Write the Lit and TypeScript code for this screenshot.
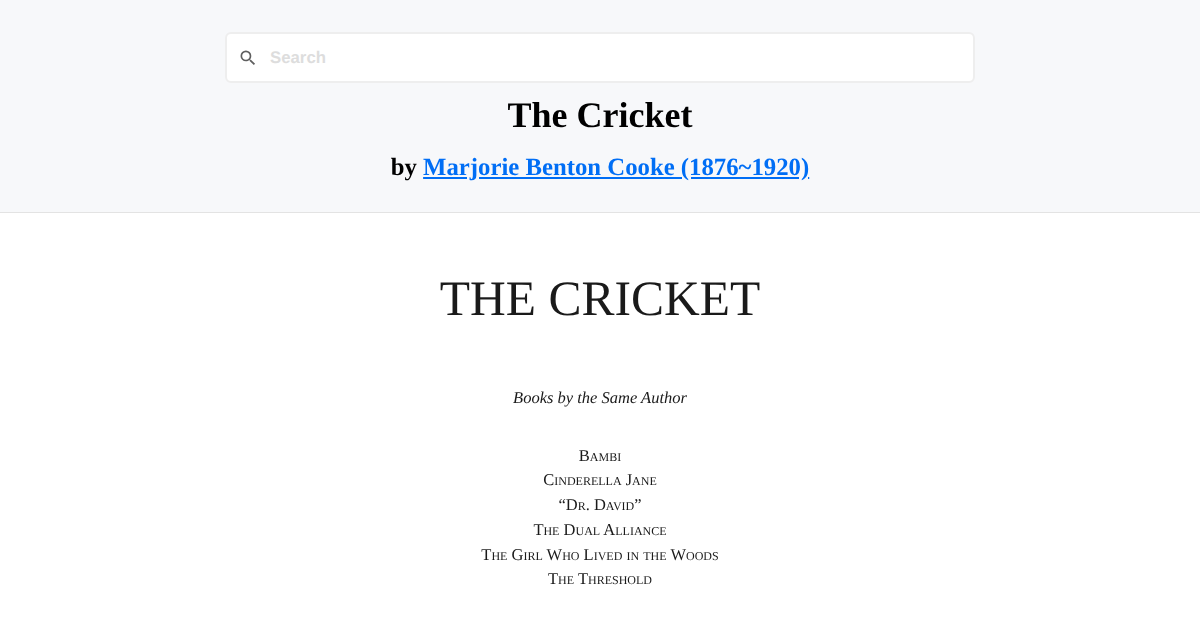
import { LitElement, html, css } from "lit";
import { customElement } from "lit/decorators.js";

@customElement("app-root")
export class AppRoot extends LitElement {
  static styles = css`
    :host { display: block; height: 628px; overflow: hidden; background: #fff; font-family: "Liberation Serif", serif; text-rendering: geometricPrecision; }
    .head { background: #f7f8fa; border-bottom: 1px solid #e3e3e3; height: 212px; display: flex; flex-direction: column; align-items: center; }
    .search { box-sizing: border-box; width: 750px; height: 51px; margin-top: 32px; background: #fff; border: 2px solid #eeeeee; border-radius: 6px; display: flex; align-items: center; padding-left: 11px; gap: 12px; font-family: "Liberation Sans", sans-serif; font-size: 16.8px; font-weight: 700; color: #dddddd; }
    .search svg { width: 20px; height: 20px; fill: #5f5f5f; flex: none; }
    h1 { margin: 11px 0 0; font-size: 36px; line-height: 43px; font-weight: 700; color: #000; will-change: opacity; }
    .by { margin: 15px 0 0; font-size: 24.75px; line-height: 31px; font-weight: 700; color: #000; will-change: opacity; }
    .by a { color: #006ef5; }
    .body { display: flex; flex-direction: column; align-items: center; color: #1a1a1a; text-align: center; font-size: 16.5px; line-height: 24.7px; will-change: opacity; }
    h2 { margin: 55px 0 0; font-size: 49.5px; line-height: 61px; font-weight: 400; }
    .same { margin: 57px 0 0; font-style: italic; }
    .list { margin: 33px 0 0; font-variant: small-caps; }
  `;
  render() {
    return html`
      <div class="head">
        <div class="search">
          <svg viewBox="0 0 24 24"><path d="M15.5 14h-.79l-.28-.27A6.471 6.471 0 0 0 16 9.5 6.5 6.5 0 1 0 9.5 16c1.61 0 3.09-.59 4.23-1.57l.27.28v.79l5 4.99L20.49 19l-4.99-5zm-6 0C7.01 14 5 11.99 5 9.5S7.01 5 9.5 5 14 7.01 14 9.5 11.99 14 9.5 14z"/></svg>
          <span>Search</span>
        </div>
        <h1>The Cricket</h1>
        <div class="by">by <a href="#">Marjorie Benton Cooke (1876~1920)</a></div>
      </div>
      <div class="body">
        <h2>THE CRICKET</h2>
        <div class="same">Books by the Same Author</div>
        <div class="list">
          <div>Bambi</div>
          <div>Cinderella Jane</div>
          <div>“Dr. David”</div>
          <div>The Dual Alliance</div>
          <div>The Girl Who Lived in the Woods</div>
          <div>The Threshold</div>
        </div>
      </div>
    `;
  }
}
